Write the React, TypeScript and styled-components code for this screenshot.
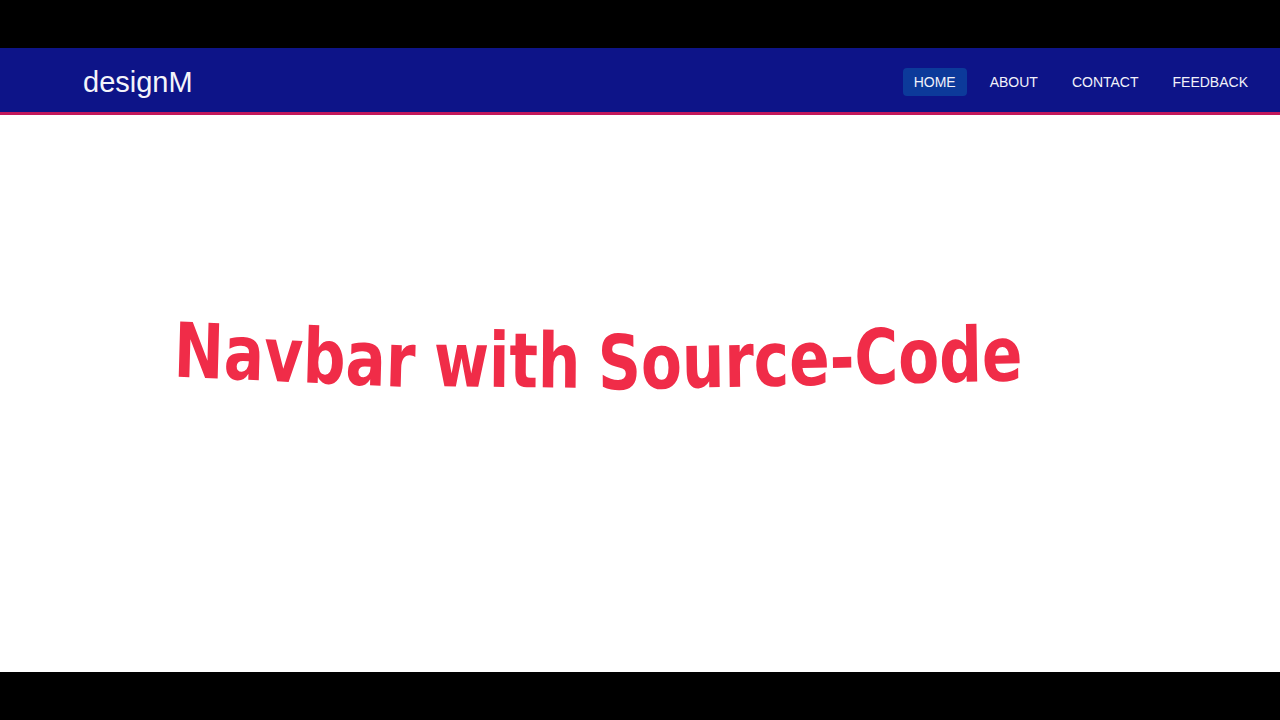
import styled, { createGlobalStyle } from 'styled-components';

const GlobalStyle = createGlobalStyle`
  html, body {
    margin: 0;
    padding: 0;
    background: #000;
  }
  * {
    box-sizing: border-box;
  }
`;

const Frame = styled.div`
  width: 1280px;
  height: 720px;
  display: flex;
  flex-direction: column;
  background: #000;
`;

const Letterbox = styled.div`
  height: 48px;
  flex-shrink: 0;
  background: #000;
`;

const Nav = styled.nav`
  height: 67px;
  flex-shrink: 0;
  display: flex;
  align-items: center;
  justify-content: space-between;
  padding: 4px 21px 0 83px;
  background: #0d1488;
  border-bottom: 3px solid #c2185b;
`;

const Logo = styled.a`
  font-family: "Liberation Sans", Arial, sans-serif;
  font-size: 29px;
  color: #f4f4fa;
  text-decoration: none;
`;

const Menu = styled.ul`
  display: flex;
  align-items: center;
  gap: 12px;
  margin: 0;
  padding: 0;
  list-style: none;
`;

const MenuLink = styled.a<{ $active?: boolean }>`
  display: block;
  height: 28px;
  line-height: 28px;
  padding: 0 11px;
  border-radius: 4px;
  font-family: "Liberation Sans", Arial, sans-serif;
  font-size: 14px;
  color: #f2f2fa;
  text-decoration: none;
  background: ${(p) => (p.$active ? '#0c3a9a' : 'transparent')};
`;

const Main = styled.main`
  flex: 1;
  display: flex;
  align-items: center;
  padding: 0 0 75px 174px;
  background: #fff;
`;

const Heading = styled.h1`
  margin: 0;
  display: flex;
  gap: 23px;
  font-family: "DejaVu Sans", sans-serif;
  font-weight: bold;
  font-size: 76px;
  line-height: 1;
  color: #f02c48;
  white-space: nowrap;
  transform: scaleX(0.785);
  transform-origin: 0 50%;
`;

const Word = styled.span<{ $tilt: number; $drop: number }>`
  display: inline-block;
  transform: translateY(${(p) => p.$drop}px) rotate(${(p) => p.$tilt}deg);
`;

const links = ['HOME', 'ABOUT', 'CONTACT', 'FEEDBACK'];

export default function App() {
  return (
    <>
      <GlobalStyle />
      <Frame>
        <Letterbox />
        <Nav>
          <Logo href="#">designM</Logo>
          <Menu>
            {links.map((l, i) => (
              <li key={l}>
                <MenuLink href="#" $active={i === 0}>{l}</MenuLink>
              </li>
            ))}
          </Menu>
        </Nav>
        <Main>
          <Heading>
            <Word $tilt={2} $drop={0}>Navbar</Word>
            <Word $tilt={0.5} $drop={5}>with</Word>
            <Word $tilt={-1} $drop={3}>Source-Code</Word>
          </Heading>
        </Main>
        <Letterbox />
      </Frame>
    </>
  );
}
